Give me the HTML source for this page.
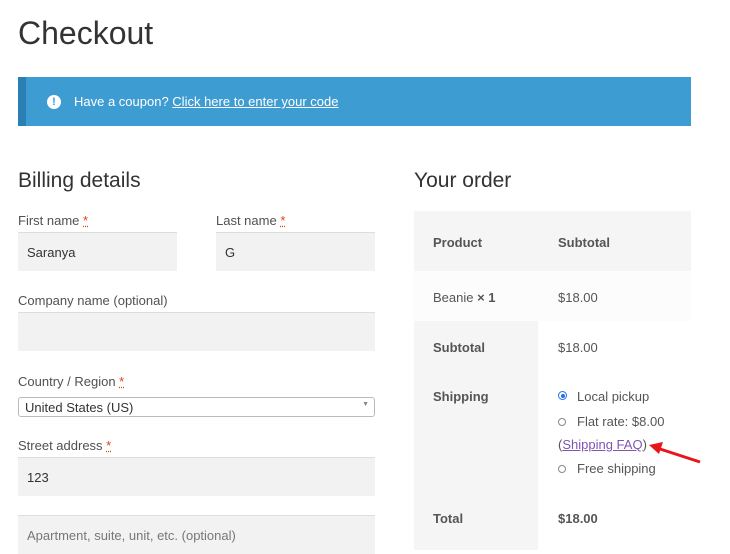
<!DOCTYPE html>
<html><head><style>
*{margin:0;padding:0;box-sizing:border-box}
body{width:730px;height:550px;overflow:hidden;background:#fff;font-family:"Liberation Sans",sans-serif;color:#515151;position:relative}
.a{position:absolute;white-space:nowrap}
.lbl{font-size:13px;color:#515151}
.req{color:#e2401c;text-decoration:underline dotted}
.inp{position:absolute;background:#f2f2f2;border-top:1px solid #ddd;font-size:13px;color:#333;padding-left:9px;display:flex;align-items:center}
.b{font-weight:bold;font-size:13px;color:#555}
.t{font-size:13px;color:#555}
.r{position:absolute;width:8px;height:8px;border-radius:50%;border:1px solid #888;background:#fff}
</style></head><body>
<div class="a" style="left:18px;top:15px;font-size:32px;font-weight:300;color:#333">Checkout</div>
<div class="a" style="left:18px;top:77px;width:673px;height:49px;background:#3d9cd2;border-left:8px solid #2a80b5"></div>
<div class="a" style="left:47px;top:95px;width:14px;height:14px;border-radius:50%;background:#fff;color:#3d9cd2;font-size:11px;font-weight:bold;text-align:center;line-height:14px">!</div>
<div class="a" style="left:74px;top:94px;font-size:13px;color:#fff">Have a coupon? <u>Click here to enter your code</u></div>

<div class="a" style="left:18px;top:169px;font-size:21px;font-weight:300;color:#333">Billing details</div>
<div class="a lbl" style="left:18px;top:213px">First name <span class="req">*</span></div>
<div class="a lbl" style="left:216px;top:213px">Last name <span class="req">*</span></div>
<div class="inp" style="left:18px;top:232px;width:159px;height:39px">Saranya</div>
<div class="inp" style="left:216px;top:232px;width:159px;height:39px">G</div>
<div class="a lbl" style="left:18px;top:293px">Company name (optional)</div>
<div class="inp" style="left:18px;top:312px;width:357px;height:39px"></div>
<div class="a lbl" style="left:18px;top:374px">Country / Region <span class="req">*</span></div>
<div class="a" style="left:18px;top:397px;width:357px;height:20px;border:1px solid #bbb;border-radius:3px;font-size:13px;color:#333;padding:2px 6px">United States (US)<span style="position:absolute;right:5px;top:3px;font-size:7px;color:#888">▼</span></div>
<div class="a lbl" style="left:18px;top:438px">Street address <span class="req">*</span></div>
<div class="inp" style="left:18px;top:457px;width:357px;height:39px">123</div>
<div class="inp" style="left:18px;top:515px;width:357px;height:39px;color:#777">Apartment, suite, unit, etc. (optional)</div>

<div class="a" style="left:414px;top:169px;font-size:21px;font-weight:300;color:#333">Your order</div>
<div class="a" style="left:414px;top:211px;width:277px;height:60px;background:#f5f5f5"></div>
<div class="a" style="left:414px;top:271px;width:277px;height:50px;background:#fcfcfc"></div>
<div class="a" style="left:414px;top:321px;width:124px;height:229px;background:#f5f5f5"></div>
<div class="a b" style="left:433px;top:235px">Product</div>
<div class="a b" style="left:558px;top:235px">Subtotal</div>
<div class="a t" style="left:433px;top:290px">Beanie <b>× 1</b></div>
<div class="a t" style="left:558px;top:290px">$18.00</div>
<div class="a b" style="left:433px;top:340px">Subtotal</div>
<div class="a t" style="left:558px;top:340px">$18.00</div>
<div class="a b" style="left:433px;top:389px">Shipping</div>
<div class="a" style="left:558px;top:391px;width:9px;height:9px;border-radius:50%;border:1px solid #2271f0;background:#fff"><div style="position:absolute;left:1.5px;top:1.5px;width:4px;height:4px;background:#2271f0;border-radius:50%"></div></div>
<div class="a t" style="left:577px;top:389px">Local pickup</div>
<div class="r" style="left:558px;top:418px"></div>
<div class="a t" style="left:577px;top:414px">Flat rate: $8.00</div>
<div class="a t" style="left:558px;top:437px">(<u style="color:#7f54b3">Shipping FAQ</u>)</div>
<div class="r" style="left:558px;top:465px"></div>
<div class="a t" style="left:577px;top:461px">Free shipping</div>
<svg class="a" style="left:645px;top:440px" width="60" height="30"><line x1="55" y1="22" x2="12" y2="8" stroke="#e8161b" stroke-width="3"/><polygon points="4,5 18,2 14,14" fill="#e8161b"/></svg>
<div class="a b" style="left:433px;top:511px">Total</div>
<div class="a b" style="left:558px;top:511px">$18.00</div>
</body></html>
